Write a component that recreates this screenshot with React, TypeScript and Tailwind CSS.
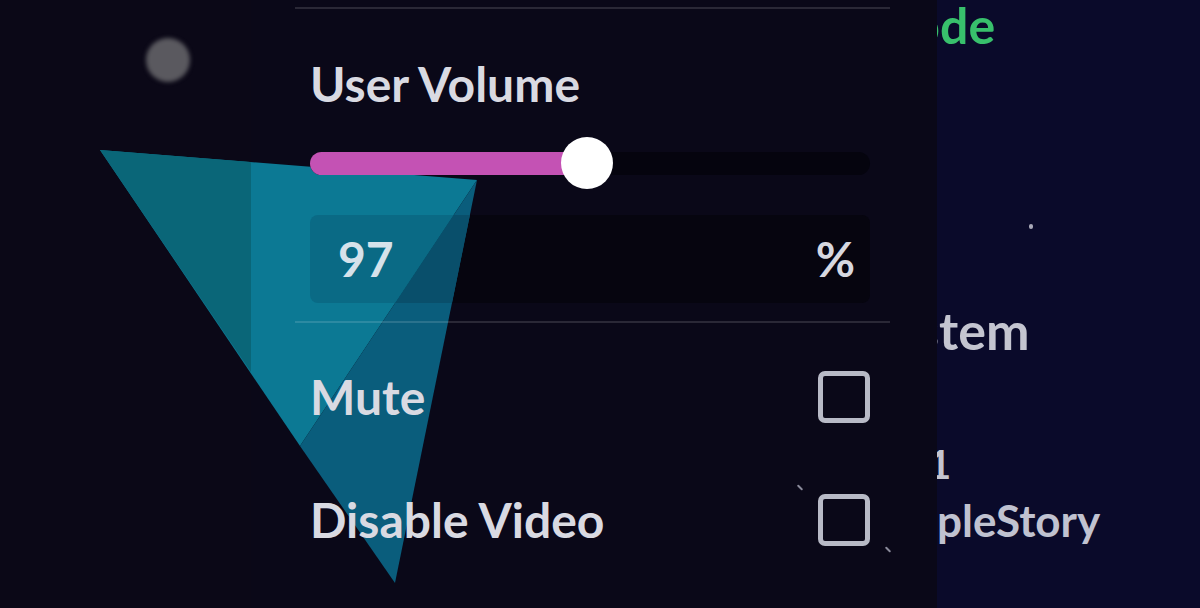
import React from "react";

const label = "font-['Lato',sans-serif] font-bold text-[48px] leading-none text-[#d9dae2]";

const Checkbox = () => (
  <div className="h-[52px] w-[52px] shrink-0 rounded-[7px] border-[5px] border-[#b8bac6]" />
);

// text of the member list that sits under the menu: the head is tucked
// behind the panel, only the tail shows
const Tail = ({ head, tail, className }: { head: string; tail: string; className: string }) => (
  <div className={`relative leading-none ${className}`}>
    <span className="absolute right-full top-0">{head}</span>
    {tail}
  </div>
);

// the teal shard over the menu, plus the volume input's dark field under it
const Facets = () => (
  <svg className="pointer-events-none absolute inset-0 h-[608px] w-[1200px]" viewBox="0 0 1200 608">
    <defs>
      <clipPath id="inputClip">
        <rect x="310" y="215" width="560" height="88" rx="8" />
      </clipPath>
    </defs>
    <rect x="310" y="215" width="560" height="88" rx="8" fill="#06050f" />
    <polygon points="100,150 477,180 300,446" fill="#0c7994" />
    <polygon points="477,180 300,446 395,583" fill="#0a5d7c" />
    <polygon points="100,150 251,162 251,372" fill="#0a6678" />
    <g clipPath="url(#inputClip)">
      <polygon points="310,215 453.7,215 395.2,303 310,303" fill="#0a6a85" />
      <polygon points="453.7,215 469.9,215 452,303 395.2,303" fill="#094f6b" />
    </g>
  </svg>
);

export default function App() {
  return (
    <div className="relative flex h-[608px] w-[1200px] overflow-hidden bg-[#0b0817] font-['Lato',sans-serif]">
      <div className="w-[251px] shrink-0">
        <div className="ml-[146px] mt-[38px] h-[44px] w-[44px] rounded-full bg-[#5a595f] blur-[2px]" />
      </div>

      <div className="flex w-[686px] shrink-0 flex-col bg-[#0a0818] pl-[59px] pr-[67px] pt-[7px]">
        <div className="relative z-10 -ml-[15px] -mr-[20px] h-[2px] bg-white/[0.13]" />

        <div className={`relative z-10 mt-[51px] ${label}`}>User Volume</div>

        <div className="relative z-10 mt-[29px] flex h-[52px] items-center">
          <div className="relative h-[23px] w-full rounded-full bg-[#05040e]">
            <div className="h-full w-[277px] rounded-full bg-[#c452b4]" />
          </div>
          <div className="absolute left-[251px] top-0 h-[52px] w-[52px] rounded-full bg-white" />
        </div>

        <div className="relative z-10 mt-[26px] flex h-[88px] items-center justify-between rounded-[8px] pl-[28px] pr-[15px]">
          <span className="text-[48px] font-bold leading-none text-[#d6e2ea]">97</span>
          <span className="text-[48px] font-bold leading-none text-[#d6d8e0]">%</span>
        </div>

        <div className="relative z-10 -ml-[15px] -mr-[20px] mt-[18px] h-[2px] bg-white/[0.13]" />

        <div className="relative z-10 mt-[48px] flex h-[52px] items-center justify-between">
          <span className={label}>Mute</span>
          <Checkbox />
        </div>

        <div className="relative z-10 mt-[71px] flex h-[52px] items-center justify-between">
          <span className={label}>Disable Video</span>
          <Checkbox />
        </div>
      </div>

      <div className="flex min-w-0 flex-1 flex-col overflow-hidden whitespace-nowrap bg-[#0a0a2a]">
        <Tail head="Mo" tail="de" className="ml-[3px] text-[50px] font-bold text-[#38c06c]" />
        <Tail head="Sys" tail="tem" className="ml-[2px] mt-[254px] text-[52px] font-bold text-[#c4c5d0]" />
        <Tail head="#" tail="1" className="-ml-[9px] mt-[88px] text-[40px] font-bold text-[#c4c5d0]" />
        <Tail head="Playing Ma" tail="pleStory" className="ml-0 mt-[14px] text-[44px] font-bold text-[#c0c2d0]" />
      </div>

      <Facets />

      <span className="absolute left-[1029px] top-[224px] h-[5px] w-[4px] rounded-full bg-[#a9a9b8]" />
      <span className="absolute left-[799px] top-[484px] h-[7px] w-[2px] -rotate-45 rounded-full bg-[#8a8a9a]" />
      <span className="absolute left-[887px] top-[546px] h-[7px] w-[2px] -rotate-45 rounded-full bg-[#8a8a9a]" />
    </div>
  );
}
